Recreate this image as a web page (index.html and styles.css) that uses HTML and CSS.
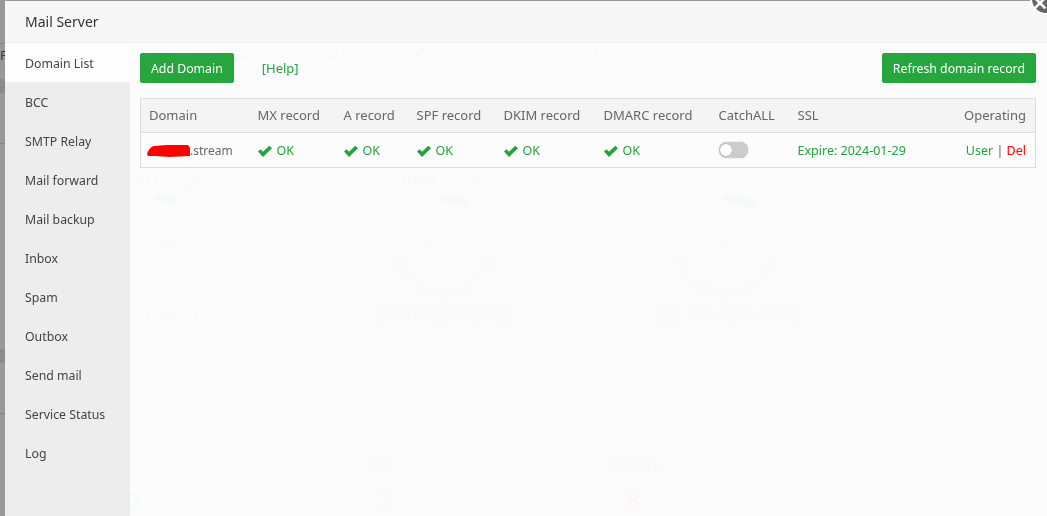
FILE: index.html
```html
<!DOCTYPE html>
<html lang="en">
<head>
    <meta charset="UTF-8">
    <meta name="viewport" content="width=device-width, initial-scale=1.0">
    <title>Mail Server</title>
    <link rel="stylesheet" href="styles.css">
</head>
<body>
    <!-- page behind the dialog, shows through faintly -->
    <div class="page">
        <div class="promo">
            <span>Pro plugin</span>
            <span class="promo-item"><i class="tick"></i>Replaceable IP</span>
            <span class="promo-item"><i class="tick"></i>Live chat technical support</span>
            <span class="promo-item"><i class="tick"></i>15 days no reason to refund</span>
        </div>
        <div class="gauges">
            <div class="gauge">
                <div class="gauge-title">CPU usage</div>
                <svg class="ring" viewBox="0 0 106 106"><circle cx="53" cy="53" r="48" class="ring-track"/><path d="M53 5 A48 48 0 0 1 64 6.3" class="ring-bar"/></svg>
                <div class="gauge-value">7.9%</div>
                <div class="gauge-note">32 Core(s)</div>
            </div>
            <div class="gauge">
                <div class="gauge-title">RAM usage</div>
                <svg class="ring" viewBox="0 0 106 106"><circle cx="53" cy="53" r="48" class="ring-track"/><path d="M53 5 A48 48 0 0 1 73 9.4" class="ring-bar"/></svg>
                <div class="gauge-value">6.3%</div>
                <div class="gauge-note">8104 / 128492(MB)</div>
            </div>
            <div class="gauge">
                <div class="gauge-title">/</div>
                <svg class="ring" viewBox="0 0 106 106"><circle cx="53" cy="53" r="48" class="ring-track"/><path d="M53 5 A48 48 0 0 1 78 12" class="ring-bar"/></svg>
                <div class="gauge-value">8%</div>
                <div class="gauge-note">282.67G / 3564.49G</div>
            </div>
        </div>
        <div class="stats">
            <div class="stat"><div class="stat-name">FTP</div><div class="stat-num green">0</div></div>
            <div class="stat"><div class="stat-name">DB</div><div class="stat-num green">2</div></div>
            <div class="stat"><div class="stat-name">Security</div><div class="stat-num red">8</div></div>
        </div>
    </div>

    <div class="shade"></div>

    <div class="dialog">
        <div class="dialog-title">Mail Server</div>
        <div class="dialog-body">
            <ul class="side">
                <li class="active">Domain List</li>
                <li>BCC</li>
                <li>SMTP Relay</li>
                <li>Mail forward</li>
                <li>Mail backup</li>
                <li>Inbox</li>
                <li>Spam</li>
                <li>Outbox</li>
                <li>Send mail</li>
                <li>Service Status</li>
                <li>Log</li>
            </ul>
            <div class="main">
                <div class="toolbar">
                    <button class="btn">Add Domain</button>
                    <a class="help">[Help]</a>
                    <button class="btn btn-right">Refresh domain record</button>
                </div>
                <table class="domains">
                    <thead>
                        <tr>
                            <th class="c-domain">Domain</th>
                            <th class="c-mx">MX record</th>
                            <th class="c-a">A record</th>
                            <th class="c-spf">SPF record</th>
                            <th class="c-dkim">DKIM record</th>
                            <th class="c-dmarc">DMARC record</th>
                            <th class="c-catch">CatchALL</th>
                            <th class="c-ssl">SSL</th>
                            <th class="c-op">Operating</th>
                        </tr>
                    </thead>
                    <tbody>
                        <tr>
                            <td class="domain-name"><svg class="redact" viewBox="0 0 43 12"><path d="M0 9 C1 6 3 2 7 1 L20 0 L41 0 L43 3 L43 11 L22 12 L8 11 L1 11 Z"/></svg>.stream</td>
                            <td class="ok"><svg class="check" viewBox="0 0 14 12"><path d="M0 6.5 L2.5 4.2 L5 6.7 L11.3 .8 L14 3.2 L5 12 Z"/></svg>OK</td>
                            <td class="ok"><svg class="check" viewBox="0 0 14 12"><path d="M0 6.5 L2.5 4.2 L5 6.7 L11.3 .8 L14 3.2 L5 12 Z"/></svg>OK</td>
                            <td class="ok"><svg class="check" viewBox="0 0 14 12"><path d="M0 6.5 L2.5 4.2 L5 6.7 L11.3 .8 L14 3.2 L5 12 Z"/></svg>OK</td>
                            <td class="ok"><svg class="check" viewBox="0 0 14 12"><path d="M0 6.5 L2.5 4.2 L5 6.7 L11.3 .8 L14 3.2 L5 12 Z"/></svg>OK</td>
                            <td class="ok"><svg class="check" viewBox="0 0 14 12"><path d="M0 6.5 L2.5 4.2 L5 6.7 L11.3 .8 L14 3.2 L5 12 Z"/></svg>OK</td>
                            <td><span class="switch"></span></td>
                            <td class="expire">Expire: 2024-01-29</td>
                            <td class="ops"><a class="link-green">User</a> | <a class="link-red">Del</a></td>
                        </tr>
                    </tbody>
                </table>
            </div>
        </div>
    </div>

    <a class="close"><svg viewBox="0 0 12 12"><path d="M2 2 L10 10 M10 2 L2 10"/></svg></a>
</body>
</html>
```

FILE: styles.css
```css
* {
    box-sizing: border-box;
}
html, body {
    height: 100%;
    margin: 0;
    overflow: hidden;
}
body {
    font-family: "Noto Sans", "Open Sans", sans-serif;
    font-size: 12.3px;
    color: #666;
    background: #fff;
}

/* page behind */
.page {
    height: 516px;
    padding-top: 43px;
    background:
        linear-gradient(#ddd, #ddd) 0 43px / 100% 1px no-repeat,
        linear-gradient(#ddd, #ddd) 0 87px / 100% 1px no-repeat,
        linear-gradient(#ddd, #ddd) 0 143px / 100% 1px no-repeat,
        linear-gradient(#ddd, #ddd) 0 413px / 100% 1px no-repeat,
        linear-gradient(#eaeaea, #eaeaea) 0 79px / 100% 14px no-repeat,
        linear-gradient(#eaeaea, #eaeaea) 0 349px / 100% 14px no-repeat,
        #fff;
}
.promo {
    display: flex;
    height: 24px;
    line-height: 24px;
    font-size: 13px;
    color: #6b5a4a;
    white-space: nowrap;
}
.promo-item {
    margin-left: 21px;
}
.tick {
    display: inline-block;
    width: 13px;
    height: 7px;
    margin: 0 3px 5px 0;
    border-left: 2px solid #20a53a;
    border-bottom: 2px solid #20a53a;
    transform: rotate(-45deg);
}
.gauges {
    display: flex;
    margin-top: 102px;
    padding-left: 107px;
}
.gauge {
    position: relative;
    width: 283.5px;
}
.gauge-title {
    display: flex;
    justify-content: center;
    width: 106px;
    height: 24px;
    line-height: 24px;
    font-size: 16px;
    white-space: nowrap;
    color: #666;
}
.ring {
    display: block;
    width: 106px;
    height: 106px;
}
.ring-track {
    fill: none;
    stroke: #ccc;
    stroke-width: 8;
}
.ring-bar {
    fill: none;
    stroke: #20a53a;
    stroke-width: 8;
    stroke-linecap: round;
}
.gauge-value {
    position: absolute;
    top: 63px;
    left: 0;
    width: 106px;
    font-size: 18px;
    line-height: 26px;
    text-align: center;
    color: #20a53a;
}
.gauge-note {
    display: flex;
    justify-content: center;
    width: 106px;
    margin-top: 5px;
    font-size: 15.5px;
    line-height: 22px;
    white-space: nowrap;
    color: #666;
}
.stats {
    display: flex;
    margin-top: 128px;
    padding-left: 8px;
}
.stat {
    width: 250px;
    text-align: center;
}
.stat-name {
    font-size: 14px;
    line-height: 20px;
    color: #666;
}
.stat-num {
    margin-top: 11px;
    font-size: 26px;
    line-height: 30px;
}
.green {
    color: #20a53a;
}
.red {
    color: #ef0808;
}

/* dark layer under the dialog */
.shade {
    position: fixed;
    inset: 0;
    background: rgba(0, 0, 0, 0.4);
}

.dialog {
    position: fixed;
    top: 1px;
    left: 5px;
    width: 1042px;
    height: 515px;
    display: flex;
    flex-direction: column;
    background: rgba(255, 255, 255, 0.965);
}
.dialog-title {
    flex: none;
    height: 42px;
    padding-left: 20px;
    line-height: 41px;
    font-size: 14px;
    color: #333;
    background: #f7f7f7;
    border-bottom: 1px solid #eee;
}
.dialog-body {
    flex: 1;
    display: flex;
}
.side {
    flex: none;
    width: 125px;
    margin: 0;
    padding: 0;
    list-style: none;
    background: rgba(0, 0, 0, 0.06);
}
.side li {
    height: 39px;
    padding: 1px 0 0 20px;
    line-height: 39px;
    color: #444;
}
.side .active {
    background: #fdfdfd;
}
.main {
    flex: 1;
    padding: 10px 12px 0 10px;
}
.toolbar {
    display: flex;
    align-items: center;
    height: 30px;
}
.btn {
    height: 30px;
    padding: 0 10px;
    border: 1px solid #20a53a;
    border-radius: 2px;
    font: inherit;
    color: #fff;
    background: #27a640;
}
.btn-right {
    margin-left: auto;
}
.help {
    margin-left: 28px;
    font-size: 13px;
    color: #20a53a;
}
.domains {
    width: 895px;
    margin-top: 15px;
    border-collapse: collapse;
    table-layout: fixed;
    border: 1px solid #ddd;
}
.domains th {
    height: 34px;
    padding: 0 0 2px 8px;
    font-size: 13px;
    font-weight: normal;
    text-align: left;
    color: #666;
    background: #f4f4f4;
    border-bottom: 1px solid #ddd;
}
.domains td {
    height: 35px;
    padding: 0 0 0 8px;
    font-size: 12.5px;
    color: #666;
    background: #fcfcfc;
}
.c-domain { width: 109px; }
.c-mx { width: 86px; }
.c-a { width: 73px; }
.c-spf { width: 87px; }
.c-dkim { width: 100px; }
.c-dmarc { width: 115px; }
.c-catch { width: 79px; }
.c-ssl { width: 133px; }
.c-op { width: 113px; }
.domains .c-op,
.domains .ops {
    padding: 0 9px 2px 0;
    text-align: right;
}
.domains .ops {
    padding-bottom: 0;
}
.domains .domain-name {
    padding-left: 6px;
    white-space: nowrap;
    font-size: 12px;
}
.redact {
    width: 43px;
    height: 12px;
    vertical-align: -2px;
    fill: #fe0000;
}
.domains .ok {
    color: #20a53a;
}
.check {
    width: 14px;
    height: 12px;
    margin-right: 5px;
    vertical-align: -2px;
    fill: #20a53a;
}
.switch {
    position: relative;
    display: block;
    width: 29px;
    height: 16px;
    border-radius: 8px;
    background: #ccc;
    box-shadow: 0 0 1px #999;
}
.switch::after {
    content: "";
    position: absolute;
    top: 2px;
    left: 1px;
    width: 12px;
    height: 12px;
    border-radius: 50%;
    background: #fff;
    box-shadow: 0 0 1px #888;
}
.domains .expire {
    color: #20a53a;
    white-space: nowrap;
}
.link-green {
    color: #20a53a;
}
.link-red {
    color: #f00;
}

.close {
    position: fixed;
    top: -17px;
    right: -15px;
    width: 32px;
    height: 32px;
    display: flex;
    align-items: center;
    justify-content: center;
    padding: 8px 12px 0 0;
    border: 2px solid #fff;
    border-radius: 50%;
    background: #666;
}
.close svg {
    flex: none;
    width: 16px;
    height: 16px;
    fill: none;
    stroke: #fff;
    stroke-width: 2;
}
```
